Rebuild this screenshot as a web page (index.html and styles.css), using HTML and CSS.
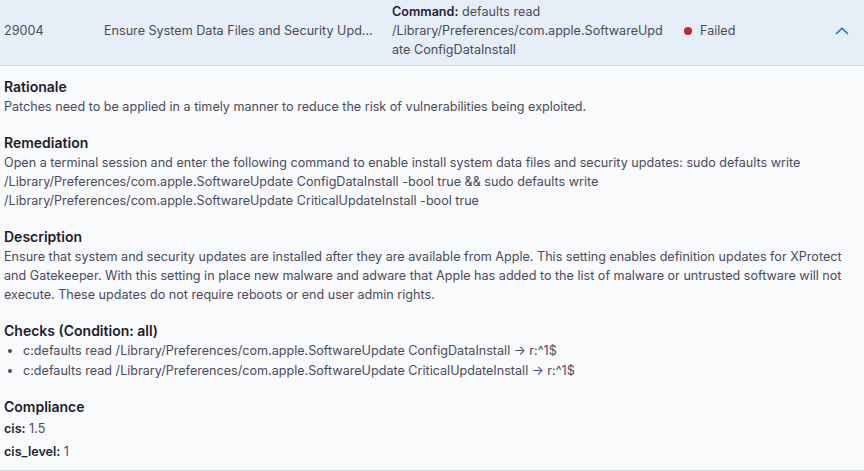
FILE: index.html
```html
<!DOCTYPE html>
<html lang="en">
<head>
<meta charset="utf-8">
<title>Check 29004</title>
<link rel="stylesheet" href="styles.css">
</head>
<body>
<div class="item">
  <div class="row">
    <div class="cell id">29004</div>
    <div class="cell title">Ensure System Data Files and Security Upd...</div>
    <div class="cell command"><b>Command:</b><span> defaults read /Library/Preferences/com.apple.SoftwareUpdate ConfigDataInstall</span></div>
    <div class="cell status"><span class="dot"></span>Failed</div>
    <div class="cell toggle">
      <svg width="14" height="8" viewBox="0 0 14 8"><path d="M1 7 L7 1.2 L13 7" fill="none" stroke="#1a6fc4" stroke-width="1.5"/></svg>
    </div>
  </div>
  <div class="details">
    <section class="sec">
      <h3>Rationale</h3>
      <p>Patches need to be applied in a timely manner to reduce the risk of vulnerabilities being exploited.</p>
    </section>
    <section class="sec">
      <h3>Remediation</h3>
      <p>Open a terminal session and enter the following command to enable install system data files and security updates: sudo defaults write /Library/Preferences/com.apple.SoftwareUpdate ConfigDataInstall -bool true &amp;&amp; sudo defaults write /Library/Preferences/com.apple.SoftwareUpdate CriticalUpdateInstall -bool true</p>
    </section>
    <section class="sec">
      <h3>Description</h3>
      <p>Ensure that system and security updates are installed after they are available from Apple. This setting enables definition updates for XProtect and Gatekeeper. With this setting in place new malware and adware that Apple has added to the list of malware or untrusted software will not execute. These updates do not require reboots or end user admin rights.</p>
    </section>
    <section class="sec">
      <h3>Checks (Condition: all)</h3>
      <ul class="checks">
        <li>c:defaults read /Library/Preferences/com.apple.SoftwareUpdate ConfigDataInstall → r:^1$</li>
        <li>c:defaults read /Library/Preferences/com.apple.SoftwareUpdate CriticalUpdateInstall → r:^1$</li>
      </ul>
    </section>
    <section class="sec">
      <h3>Compliance</h3>
      <div class="kv"><b>cis:</b> 1.5</div>
      <div class="kv"><b>cis_level:</b> 1</div>
    </section>
  </div>
</div>
</body>
</html>
```

FILE: styles.css
```css
* { box-sizing: border-box; }
html, body { margin: 0; padding: 0; background: #f9fafc; }
body {
  font-family: Inter, "Noto Sans", sans-serif;
  font-size: 12.6px;
  line-height: 19px;
  color: #4b4b5c;
}
.item {
  border-bottom: 2px solid #d3d8e2;
}
.row {
  display: flex;
  align-items: center;
  background: #e6eff7;
  border-bottom: 1px solid #d3dde8;
  padding: 2px 0 6px 4px;
}
.cell { flex: none; }
.id { width: 100px; }
.title { width: 280px; margin-right: 8px; white-space: nowrap; overflow: hidden; }
.command { width: 274px; overflow-wrap: anywhere; margin-right: 18px; }
.command b { color: #252533; font-weight: 600; }
.status { width: 148px; display: flex; align-items: center; }
.dot {
  width: 8px; height: 8px; border-radius: 50%;
  background: #c4262a; margin-right: 8px;
}
.toggle { width: 20px; display: flex; align-items: center; justify-content: center; }
.toggle svg { display: block; }
.details {
  display: flex;
  flex-direction: column;
  gap: 17px;
  padding: 11px 4px 9px;
}
.sec h3 {
  margin: 0;
  font-size: 14px;
  line-height: 20px;
  font-weight: 600;
  color: #1d1d2b;
}
.sec p { margin: 0; }
.checks { margin: 0; padding-left: 19px; }
.checks li { line-height: 19.5px; }
.kv { margin-top: 2px; }
.kv + .kv { margin-top: 4px; }
.kv b { font-weight: 600; color: #252533; }
```
